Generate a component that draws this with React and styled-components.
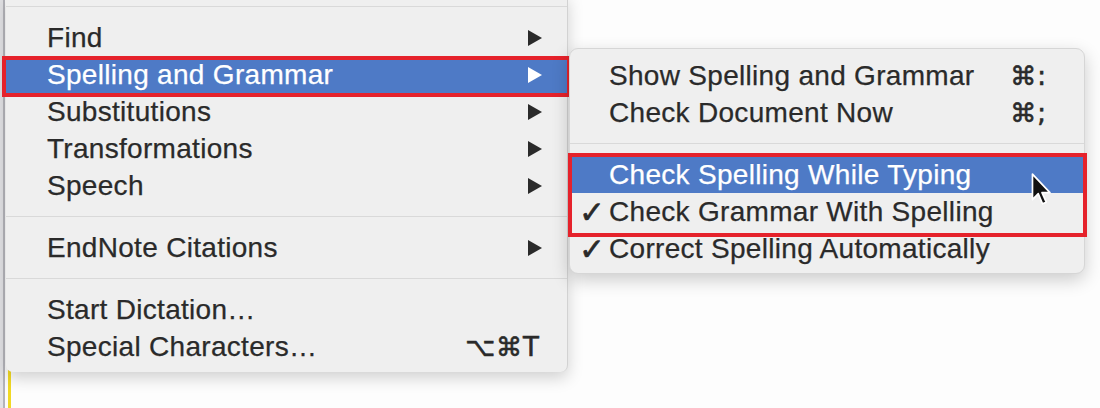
import React from "react";
import styled, { createGlobalStyle } from "styled-components";

const GlobalStyle = createGlobalStyle`
    html, body {
        margin: 0;
        padding: 0;
        background: #fbfbfb;
    }
`;

const mainItems = [
    { type: "sep" },
    { label: "Find", sub: true },
    { label: "Spelling and Grammar", sub: true, active: true, boxed: true },
    { label: "Substitutions", sub: true },
    { label: "Transformations", sub: true },
    { label: "Speech", sub: true },
    { type: "sep" },
    { label: "EndNote Citations", sub: true },
    { type: "sep" },
    { label: "Start Dictation…" },
    { label: "Special Characters…", shortcut: "⌥⌘T" },
];

const Arrow = ({ color }) => (
    <svg width="14" height="16" viewBox="0 0 14 16">
        <polygon points="0,0 14,8 0,16" fill={color} />
    </svg>
);

const Pointer = () => (
    <svg width="24" height="36" viewBox="0 0 22 34">
        <path
            d="M2 2 L2 26 L7.5 20.5 L11.5 30 L15 28.5 L11 19.5 L18.5 19.5 Z"
            fill="#111"
            stroke="#fff"
            strokeWidth="1.6"
            strokeLinejoin="round"
        />
    </svg>
);

const App = () => {
    return (
        <>
            <GlobalStyle />
            <Screen>
                <Gutter />
                <Document />

                <MainMenu>
                    {mainItems.map((item, i) =>
                        item.type === "sep" ? (
                            <Separator key={i} />
                        ) : (
                            <Row key={i} active={item.active} boxed={item.boxed}>
                                <Label>{item.label}</Label>
                                {item.shortcut && <Shortcut>{item.shortcut}</Shortcut>}
                                {item.sub && <Arrow color={item.active ? "#fff" : "#2a2a2a"} />}
                            </Row>
                        )
                    )}
                </MainMenu>

                <SubMenu>
                    <SubRow>
                        <Check />
                        <Label>Show Spelling and Grammar</Label>
                        <Shortcut>⌘:</Shortcut>
                    </SubRow>
                    <SubRow>
                        <Check />
                        <Label>Check Document Now</Label>
                        <Shortcut>⌘;</Shortcut>
                    </SubRow>
                    <Separator />
                    <Boxed>
                        <SubRow active>
                            <Check />
                            <Label>Check Spelling While Typing</Label>
                        </SubRow>
                        <SubRow>
                            <Check>✓</Check>
                            <Label>Check Grammar With Spelling</Label>
                        </SubRow>
                    </Boxed>
                    <SubRow>
                        <Check>✓</Check>
                        <Label>Correct Spelling Automatically</Label>
                    </SubRow>
                </SubMenu>

                <Cursor>
                    <Pointer />
                </Cursor>
            </Screen>
        </>
    );
};

export default App;

const Screen = styled.div`
    position: relative;
    width: 1100px;
    height: 408px;
    overflow: hidden;
    display: flex;
    background: #fbfbfb;
    font-family: "Liberation Sans", "DejaVu Sans", Arial, sans-serif;
`;

const Gutter = styled.div`
    width: 3px;
    background: #e2e2e5;
    border-right: 2px solid #b4b4ba;
`;

const Document = styled.div`
    flex: 1;
    margin-left: 3px;
    border-left: 3px solid #f1d924;
    background: #fdfdfd;
`;

const MenuPanel = styled.div`
    position: absolute;
    display: flex;
    flex-direction: column;
    background: #efefef;
    color: #2a2a2a;
    font-size: 28px;
    letter-spacing: 0.3px;
    -webkit-text-stroke: 0.25px currentColor;
`;

const MainMenu = styled(MenuPanel)`
    left: 6px;
    top: -6px;
    width: 561px;
    padding-bottom: 7px;
    border-radius: 0 0 7px 7px;
    border-right: 1px solid #d2d2d2;
    box-shadow: 0 6px 16px rgb(0 0 0 / 18%);
`;

const SubMenu = styled(MenuPanel)`
    left: 569px;
    top: 48px;
    width: 514px;
    padding: 8px 0 6px;
    border: 1px solid #d6d6d6;
    border-radius: 9px;
    box-shadow: 0 6px 18px rgb(0 0 0 / 20%);
`;

const Separator = styled.div`
    height: 1px;
    margin: 12px 0;
    background: #d9d9d9;
`;

const Row = styled.div`
    position: relative;
    height: 37px;
    display: flex;
    align-items: center;
    padding: 0 25px 0 41px;
    background: ${({ active }) => (active ? "#4e7ac6" : "transparent")};
    color: ${({ active }) => (active ? "#fff" : "#2a2a2a")};

    ${({ boxed }) =>
        boxed &&
        `
        &::after {
            content: "";
            position: absolute;
            top: 0px;
            left: -4px;
            right: -4px;
            bottom: -4px;
            border: 4px solid #e5222b;
        }
    `}
`;

const SubRow = styled(Row)`
    padding: 0 35px 0 10px;
`;

const Label = styled.span`
    flex: 1;
    white-space: nowrap;
`;

const Shortcut = styled.span`
    font-family: "DejaVu Sans", sans-serif;
    font-size: 26px;
    letter-spacing: 1px;
    margin-right: 2px;
    -webkit-text-stroke: 0.6px currentColor;
`;

const Check = styled.span`
    width: 30px;
    margin-left: -1px;
    font-family: "DejaVu Sans", sans-serif;
    font-size: 31px;
    -webkit-text-stroke: 0.6px currentColor;
`;

const Boxed = styled.div`
    position: relative;

    &::after {
        content: "";
        position: absolute;
        top: -3px;
        left: -2px;
        right: -3px;
        bottom: -7px;
        border: 4px solid #e5222b;
        pointer-events: none;
    }
`;

const Cursor = styled.div`
    position: absolute;
    left: 1030px;
    top: 172px;
    line-height: 0;
`;
